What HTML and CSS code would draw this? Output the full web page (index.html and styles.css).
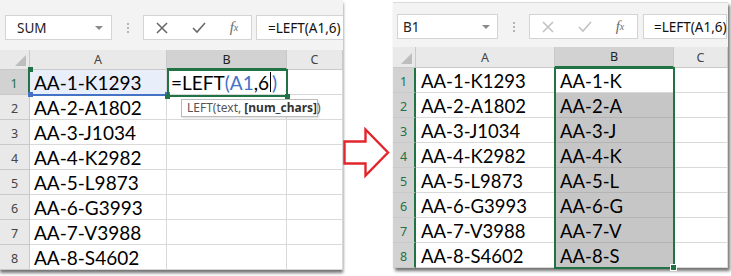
FILE: index.html
```html
<!DOCTYPE html>
<html lang="en">
<head>
  <meta charset="UTF-8" />
  <title>LEFT formula example</title>
  <link rel="stylesheet" href="styles.css">
</head>
<body>
<div class="page">

  <!-- before: editing the formula -->
  <div class="sheet sheet-left">
    <div class="toolbar">
      <div class="namebox"><span>SUM</span><span class="drop"></span></div>
      <div class="grip"><i></i><i></i><i></i></div>
      <div class="buttons">
        <span class="btn"><svg width="12" height="12" viewBox="0 0 12 12"><path d="M1 1L11 11M11 1L1 11"/></svg></span>
        <span class="btn"><svg width="14" height="12" viewBox="0 0 14 12"><path d="M1 6L5 10L13 1"/></svg></span>
        <span class="btn fx">f<sub>x</sub></span>
      </div>
      <div class="formula">=LEFT(A1,6)</div>
    </div>
    <div class="grid-wrap">
      <div class="grid">
        <div class="corner"><span class="tri"></span></div>
        <div class="head">A</div>
        <div class="head sel">B</div>
        <div class="head">C</div>

        <div class="rowhead sel">1</div>
        <div class="cell ref">AA-1-K1293</div>
        <div class="cell edit">=LEFT<span class="blue">(A1</span>,6<span class="cursor"></span><span class="blue">)</span></div>
        <div class="cell"></div>

        <div class="rowhead">2</div><div class="cell">AA-2-A1802</div><div class="cell"></div><div class="cell"></div>
        <div class="rowhead">3</div><div class="cell">AA-3-J1034</div><div class="cell"></div><div class="cell"></div>
        <div class="rowhead">4</div><div class="cell">AA-4-K2982</div><div class="cell"></div><div class="cell"></div>
        <div class="rowhead">5</div><div class="cell">AA-5-L9873</div><div class="cell"></div><div class="cell"></div>
        <div class="rowhead">6</div><div class="cell">AA-6-G3993</div><div class="cell"></div><div class="cell"></div>
        <div class="rowhead">7</div><div class="cell">AA-7-V3988</div><div class="cell"></div><div class="cell"></div>
        <div class="rowhead">8</div><div class="cell">AA-8-S4602</div><div class="cell"></div><div class="cell"></div>
      </div>
      <div class="refbox"><i class="dot tl"></i><i class="dot bl"></i><i class="dot br"></i></div>
      <div class="editbox"><i class="dot bl"></i><i class="dot br"></i></div>
      <div class="tip">LEFT(text, <b>[num_chars]</b>)</div>
    </div>
  </div>

  <div class="arrow">
    <svg width="50" height="52" viewBox="0 0 50 52">
      <path d="M1.5 14.5H22.5V2.5L45 25.5L22.5 48.5V36.5H1.5Z"/>
    </svg>
  </div>

  <!-- after: result filled down -->
  <div class="sheet sheet-right">
    <div class="toolbar">
      <div class="namebox"><span>B1</span><span class="drop"></span></div>
      <div class="grip"><i></i><i></i><i></i></div>
      <div class="buttons off">
        <span class="btn"><svg width="12" height="12" viewBox="0 0 12 12"><path d="M1 1L11 11M11 1L1 11"/></svg></span>
        <span class="btn"><svg width="14" height="12" viewBox="0 0 14 12"><path d="M1 6L5 10L13 1"/></svg></span>
        <span class="btn fx">f<sub>x</sub></span>
      </div>
      <div class="formula">=LEFT(A1,6)</div>
    </div>
    <div class="grid-wrap">
      <div class="grid">
        <div class="corner"><span class="tri"></span></div>
        <div class="head">A</div>
        <div class="head sel">B</div>
        <div class="head">C</div>

        <div class="rowhead sel">1</div><div class="cell">AA-1-K1293</div><div class="cell">AA-1-K</div><div class="cell"></div>
        <div class="rowhead sel">2</div><div class="cell">AA-2-A1802</div><div class="cell picked">AA-2-A</div><div class="cell"></div>
        <div class="rowhead sel">3</div><div class="cell">AA-3-J1034</div><div class="cell picked">AA-3-J</div><div class="cell"></div>
        <div class="rowhead sel">4</div><div class="cell">AA-4-K2982</div><div class="cell picked">AA-4-K</div><div class="cell"></div>
        <div class="rowhead sel">5</div><div class="cell">AA-5-L9873</div><div class="cell picked">AA-5-L</div><div class="cell"></div>
        <div class="rowhead sel">6</div><div class="cell">AA-6-G3993</div><div class="cell picked">AA-6-G</div><div class="cell"></div>
        <div class="rowhead sel">7</div><div class="cell">AA-7-V3988</div><div class="cell picked">AA-7-V</div><div class="cell"></div>
        <div class="rowhead sel">8</div><div class="cell">AA-8-S4602</div><div class="cell picked">AA-8-S</div><div class="cell"></div>
      </div>
      <div class="rangebox"><i class="handle"></i></div>
    </div>
  </div>

</div>
</body>
</html>
```

FILE: styles.css
```css
* {
  box-sizing: border-box;
}

body {
  margin: 0;
  background: #ffffff;
  font-family: 'Noto Sans', sans-serif;
}

.page {
  display: flex;
  width: 731px;
  height: 276px;
  overflow: hidden;
}

.sheet {
  background: #ffffff;
  flex: none;
}

.sheet-left {
  width: 343px;
  height: 270px;
  box-shadow: 0 3px 3px rgba(0, 0, 0, 0.55);
}

.sheet-right {
  width: 335px;
  height: 266px;
  margin-top: 2px;
  box-shadow: 2px 3px 3px rgba(0, 0, 0, 0.55);
}

/* formula bar */
.toolbar {
  display: flex;
  align-items: flex-start;
  background: #f3f3f3;
  overflow: hidden;
  white-space: nowrap;
}

.sheet-left .toolbar {
  height: 50px;
  padding: 15px 0 0 5px;
}

.sheet-right .toolbar {
  height: 45px;
  padding: 11px 0 0 4px;
  border-top: 1px solid #dadada;
}

.namebox,
.buttons,
.formula {
  height: 25px;
  background: #ffffff;
  border: 1px solid #d4d4d4;
  display: flex;
  align-items: center;
  font-size: 13.5px;
  color: #222;
  flex: none;
}

.namebox {
  justify-content: space-between;
}

.sheet-left .namebox {
  width: 107px;
  padding: 0 8px 0 11px;
}

.sheet-right .namebox {
  width: 101px;
  padding: 0 7px 0 5px;
}

.drop {
  width: 0;
  height: 0;
  border-left: 4px solid transparent;
  border-right: 4px solid transparent;
  border-top: 4px solid #8a8a8a;
}

.grip {
  width: 31px;
  height: 25px;
  display: flex;
  flex-direction: column;
  align-items: center;
  justify-content: center;
  gap: 2px;
  flex: none;
}

.grip i {
  width: 2px;
  height: 2px;
  background: #b5b5b5;
}

.buttons {
  display: grid;
  grid-template-columns: 36px 37px 34px;
  justify-items: center;
  width: 109px;
}

.btn {
  display: flex;
  align-items: center;
  justify-content: center;
}

.btn svg path {
  fill: none;
  stroke: #6a6a6a;
  stroke-width: 1.6;
}

.buttons.off .btn svg path {
  stroke: #c2c2c2;
}

.fx {
  font-family: 'Liberation Serif', serif;
  font-style: italic;
  font-size: 15px;
  color: #6a6a6a;
}

.fx sub {
  font-size: 10px;
  vertical-align: -1px;
}

.formula {
  margin-left: 4px;
  padding-left: 11px;
  width: 200px;
  color: #111;
}

.sheet-right .formula {
  margin-left: 5px;
  width: 84px;
  padding-left: 10px;
}

/* grid */
.grid-wrap {
  position: relative;
}

.grid {
  display: grid;
}

.sheet-left .grid {
  grid-template-columns: 30px 137px 120px 56px;
  grid-template-rows: 20px repeat(8, 25px);
}

.sheet-right .grid {
  grid-template-columns: 23px 139px 119px 54px;
  grid-template-rows: 21px repeat(8, 25px);
}

.corner,
.head,
.rowhead {
  background: #e9e9e9;
  border-right: 1px solid #c9c9c9;
  border-bottom: 1px solid #c9c9c9;
  display: flex;
  align-items: center;
  justify-content: center;
  font-size: 12.5px;
  color: #444;
}

.corner {
  align-items: flex-end;
  justify-content: flex-end;
  padding: 0 3px 3px 0;
}

.tri {
  width: 0;
  height: 0;
  border-left: 11px solid transparent;
  border-bottom: 11px solid #bdbdbd;
}

.head.sel {
  background: #d2d2d2;
  border-bottom: 2px solid #217346;
  color: #222;
}

.rowhead {
  padding-top: 3px;
}

.rowhead.sel {
  background: #d2d2d2;
  border-right: 2px solid #217346;
  color: #217346;
}

.cell {
  border-right: 1px solid #d9d9d9;
  border-bottom: 1px solid #d9d9d9;
  display: flex;
  align-items: flex-end;
  padding: 0 0 0 4px;
  font-family: 'Lato', sans-serif;
  font-size: 19px;
  line-height: 22px;
  color: #000;
  white-space: nowrap;
  overflow: hidden;
}

.sheet-right .cell {
  font-size: 18.5px;
  padding-left: 5px;
}

.cell.ref {
  background: #e8eefa;
}

.cell.picked {
  background: #c6c6c6;
  border-color: #b4b4b4;
}

.blue {
  color: #4472c4;
}

.cursor {
  display: inline-block;
  width: 1px;
  height: 20px;
  background: #000;
  margin: 0 1px 2px 1px;
  align-self: flex-end;
}

/* overlays on the grid */
.refbox {
  position: absolute;
  left: 29px;
  top: 19px;
  width: 139px;
  height: 27px;
  border-bottom: 2px solid #4472c4;
}

.editbox {
  position: absolute;
  left: 167px;
  top: 19px;
  width: 121px;
  height: 28px;
  border: 2px solid #217346;
}

.dot {
  position: absolute;
  width: 5px;
  height: 5px;
}

.refbox .dot {
  background: #4472c4;
}

.refbox .tl {
  left: -1px;
  top: -2px;
  background: #217346;
}

.refbox .bl {
  left: -1px;
  bottom: -3px;
}

.refbox .br {
  right: -2px;
  bottom: -3px;
}

.editbox .dot {
  background: #217346;
  bottom: -4px;
}

.editbox .bl {
  left: -4px;
}

.editbox .br {
  right: -4px;
}

.tip {
  position: absolute;
  left: 181px;
  top: 49px;
  width: 137px;
  height: 18px;
  background: #ffffff;
  border: 1px solid #bcbcbc;
  box-shadow: 1px 1px 2px rgba(0, 0, 0, 0.15);
  font-size: 12px;
  line-height: 16px;
  padding-left: 5px;
  color: #555;
  white-space: nowrap;
}

.tip b {
  color: #333;
}

.rangebox {
  position: absolute;
  left: 161px;
  top: 20px;
  width: 121px;
  height: 202px;
  border: 2px solid #217346;
}

.handle {
  position: absolute;
  right: -4px;
  bottom: -4px;
  width: 7px;
  height: 7px;
  background: #217346;
  border: 1px solid #ffffff;
}

/* arrow between the two shots */
.arrow {
  width: 50px;
  flex: none;
  padding-top: 127px;
}

.arrow path {
  fill: #ffffff;
  stroke: #e3262d;
  stroke-width: 2.4;
  stroke-linejoin: miter;
}
```
